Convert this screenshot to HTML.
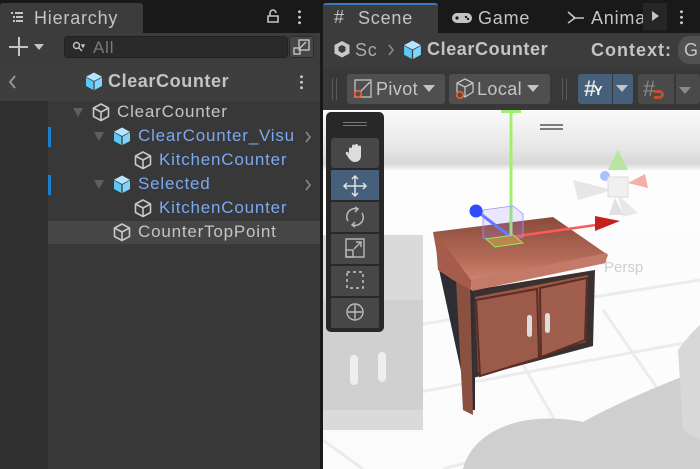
<!DOCTYPE html>
<html><head><style>
*{margin:0;padding:0;box-sizing:border-box}
body{width:700px;height:469px;overflow:hidden;background:#191919;font-family:"Liberation Sans",sans-serif;position:relative;color:#c4c4c4}
.a{position:absolute}
.t{font-size:17px;white-space:nowrap;letter-spacing:0.8px}
.blue{color:#7ca8f0}
</style></head><body>
<svg width="0" height="0" style="position:absolute"><defs>
<symbol id="cube" viewBox="0 0 20 20"><path d="M10 2L17.5 6V14.5L10 18.5L2.5 14.5V6Z M2.5 6L10 10L17.5 6 M10 10V18.5" fill="none" stroke="#c8c8c8" stroke-width="1.6" stroke-linejoin="round"/></symbol>
<symbol id="bcube" viewBox="0 0 20 20"><path d="M10 1.5L18 5.8L10 10L2 5.8Z" fill="#b5e5ff"/><path d="M2 6.5L9.4 10.6V19L2 15Z" fill="#5ec8f5"/><path d="M10.6 10.6L18 6.5V15L10.6 19Z" fill="#7dd5fb"/></symbol>
</defs></svg>

<!-- LEFT PANEL -->
<div class="a" style="left:0;top:3px;width:143px;height:30px;background:#3c3c3c;border-radius:3px 3px 0 0"></div>
<div class="a" style="left:11px;top:11px;width:12px;height:12px">
<div class="a" style="left:0;top:1px;width:2px;height:2px;background:#c4c4c4"></div><div class="a" style="left:4px;top:1px;width:8px;height:1.5px;background:#c4c4c4"></div>
<div class="a" style="left:2px;top:5px;width:2px;height:2px;background:#c4c4c4"></div><div class="a" style="left:5px;top:5px;width:7px;height:1.5px;background:#c4c4c4"></div>
<div class="a" style="left:2px;top:9px;width:2px;height:2px;background:#c4c4c4"></div><div class="a" style="left:5px;top:9px;width:7px;height:1.5px;background:#c4c4c4"></div></div>
<div class="a t" style="left:34px;top:8px;font-size:18px">Hierarchy</div>
<svg class="a" style="left:266px;top:8px" width="14" height="16"><path d="M2 8h10v6H2z M4 8V5a3 3 0 0 1 6 0" fill="none" stroke="#c4c4c4" stroke-width="1.6"/></svg>
<div class="a" style="left:298px;top:9px;width:3px;height:16px;background:radial-gradient(circle,#c4c4c4 1.4px,transparent 1.6px) 0 0/3px 5.5px"></div>
<div class="a" style="left:0;top:33px;width:320px;height:31px;background:#3c3c3c"></div>
<div class="a" style="left:9px;top:46px;width:19px;height:2px;background:#c4c4c4"></div>
<div class="a" style="left:18px;top:37px;width:2px;height:19px;background:#c4c4c4"></div>
<div class="a" style="left:34px;top:44px;border:5px solid transparent;border-top:6px solid #c4c4c4"></div>
<div class="a" style="left:64px;top:36px;width:224px;height:22px;background:#2a2a2a;border:1px solid #212121;border-radius:4px"></div>
<svg class="a" style="left:72px;top:41px" width="14" height="12"><circle cx="4.5" cy="4.5" r="3" fill="none" stroke="#c4c4c4" stroke-width="1.4"/><path d="M7 7L10 10M10 4L12 4L11 6Z" stroke="#c4c4c4" stroke-width="1.4" fill="#c4c4c4"/></svg>
<div class="a t" style="left:93px;top:38px;color:#7a7a7a">All</div>
<div class="a" style="left:289px;top:36px;width:25px;height:22px;background:#474747;border:1px solid #2a2a2a;border-radius:3px"></div>
<svg class="a" style="left:292px;top:38px" width="20" height="18"><rect x="7" y="2" width="10" height="10" fill="none" stroke="#c4c4c4" stroke-width="1.4"/><rect x="2" y="10" width="6" height="6" fill="none" stroke="#c4c4c4" stroke-width="1.4"/><path d="M8 10L14 4" stroke="#c4c4c4" stroke-width="1.4"/></svg>

<div class="a" style="left:0;top:64px;width:320px;height:37px;background:#3e3e3e"></div>
<svg class="a" style="left:7px;top:74px" width="10" height="16"><path d="M8 2L3 8L8 14" fill="none" stroke="#9a9a9a" stroke-width="1.8"/></svg>
<svg class="a" style="left:84px;top:71px" width="20" height="20"><use href="#bcube"/></svg>
<div class="a t" style="left:108px;top:71px;font-weight:bold;font-size:18px;letter-spacing:0.6px">ClearCounter</div>
<div class="a" style="left:300px;top:74px;width:3px;height:16px;background:radial-gradient(circle,#c4c4c4 1.4px,transparent 1.6px) 0 0/3px 5.5px"></div>

<div class="a" style="left:0;top:101px;width:48px;height:368px;background:#303030"></div>
<div class="a" style="left:48px;top:101px;width:272px;height:368px;background:#383838"></div>
<div class="a" style="left:48px;top:221px;width:272px;height:23px;background:#464646"></div>
<div class="a" style="left:48px;top:127px;width:3px;height:20px;background:#1a7fd0"></div>
<div class="a" style="left:48px;top:175px;width:3px;height:20px;background:#1a7fd0"></div>

<div class="a" style="left:73px;top:108px;border:5px solid transparent;border-top:9px solid #5f5f5f"></div>
<svg class="a" style="left:91px;top:102px" width="20" height="20"><use href="#cube"/></svg>
<div class="a t" style="left:117px;top:102px">ClearCounter</div>

<div class="a" style="left:94px;top:132px;border:5px solid transparent;border-top:9px solid #5f5f5f"></div>
<svg class="a" style="left:112px;top:126px" width="20" height="20"><use href="#bcube"/></svg>
<div class="a t blue" style="left:138px;top:126px;width:157px;overflow:hidden">ClearCounter_Visual</div>
<svg class="a" style="left:304px;top:130px" width="8" height="14"><path d="M2 2L6 7L2 12" fill="none" stroke="#8a8a8a" stroke-width="1.6"/></svg>
<svg class="a" style="left:133px;top:150px" width="20" height="20"><use href="#cube"/></svg>
<div class="a t blue" style="left:159px;top:150px">KitchenCounter</div>

<div class="a" style="left:94px;top:180px;border:5px solid transparent;border-top:9px solid #5f5f5f"></div>
<svg class="a" style="left:112px;top:174px" width="20" height="20"><use href="#bcube"/></svg>
<div class="a t blue" style="left:138px;top:174px">Selected</div>
<svg class="a" style="left:304px;top:178px" width="8" height="14"><path d="M2 2L6 7L2 12" fill="none" stroke="#8a8a8a" stroke-width="1.6"/></svg>
<svg class="a" style="left:133px;top:198px" width="20" height="20"><use href="#cube"/></svg>
<div class="a t blue" style="left:159px;top:198px">KitchenCounter</div>
<svg class="a" style="left:112px;top:222px" width="20" height="20"><use href="#cube"/></svg>
<div class="a t" style="left:138px;top:222px">CounterTopPoint</div>

<!-- RIGHT PANEL -->
<div class="a" style="left:323px;top:3px;width:115px;height:30px;background:#3c3c3c;border-top:2px solid #3a79bb;border-radius:3px 3px 0 0"></div>
<div class="a t" style="left:334px;top:7px;font-size:18px">#</div>
<div class="a t" style="left:358px;top:8px;font-size:18px">Scene</div>
<svg class="a" style="left:451px;top:12px" width="22" height="12"><rect x="1" y="1" width="20" height="10" rx="5" fill="#c4c4c4"/><circle cx="6" cy="6" r="1.6" fill="#191919"/><circle cx="15" cy="5" r="1.2" fill="#191919"/><circle cx="17" cy="7" r="1.2" fill="#191919"/></svg>
<div class="a t" style="left:478px;top:8px;font-size:18px">Game</div>
<svg class="a" style="left:567px;top:10px" width="18" height="14"><path d="M1 2L8 8L1 13 M6 8H17" fill="none" stroke="#c4c4c4" stroke-width="1.6"/></svg>
<div class="a t" style="left:591px;top:8px;font-size:18px;width:52px;overflow:hidden">Animation</div>
<div class="a" style="left:643px;top:3px;width:24px;height:27px;background:#262626"></div>
<div class="a" style="left:652px;top:11px;border:5px solid transparent;border-left:7px solid #c4c4c4"></div>
<div class="a" style="left:680px;top:9px;width:3px;height:16px;background:radial-gradient(circle,#c4c4c4 1.4px,transparent 1.6px) 0 0/3px 5.5px"></div>

<div class="a" style="left:323px;top:33px;width:377px;height:36px;background:#3c3c3c"></div>
<svg class="a" style="left:332px;top:39px" width="20" height="20"><path d="M10 2L17.5 6V14.5L10 18.5L2.5 14.5V6Z" fill="#c8c8c8"/><path d="M10 6L13.5 8V12L10 14L6.5 12V8Z" fill="#3c3c3c"/></svg>
<div class="a t" style="left:355px;top:40px;font-size:18px;color:#aaa">Sc</div>
<svg class="a" style="left:387px;top:43px" width="8" height="14"><path d="M2 2L6 7L2 12" fill="none" stroke="#8a8a8a" stroke-width="1.6"/></svg>
<svg class="a" style="left:402px;top:39px" width="21" height="21"><use href="#bcube"/></svg>
<div class="a t" style="left:427px;top:39px;font-weight:bold;font-size:18px;letter-spacing:0.6px">ClearCounter</div>
<div class="a t" style="left:591px;top:40px;font-weight:bold;font-size:18px;letter-spacing:1px">Context:</div>
<div class="a" style="left:678px;top:36px;width:40px;height:28px;background:#515151;border-radius:12px"></div>
<div class="a t" style="left:684px;top:40px;font-size:18px">Gr</div>

<div class="a" style="left:323px;top:69px;width:377px;height:41px;background:#383838"></div>
<div class="a" style="left:332px;top:78px;width:5px;height:22px;border-left:1px solid #5a5a5a;border-right:1px solid #5a5a5a"></div>
<div class="a" style="left:347px;top:74px;width:98px;height:30px;background:#4f4f4f;border-radius:3px"></div>
<svg class="a" style="left:353px;top:78px" width="22" height="22"><rect x="2" y="2" width="16" height="17" fill="none" stroke="#c4c4c4" stroke-width="1.3"/><path d="M4 17L17 4" stroke="#c4c4c4" stroke-width="1.3"/><circle cx="5" cy="16" r="3.3" fill="#4f4f4f" stroke="#f06030" stroke-width="1.6"/></svg>
<div class="a t" style="left:376px;top:79px;font-size:18px;letter-spacing:0.4px">Pivot</div>
<div class="a" style="left:423px;top:85px;border:6px solid transparent;border-top:7px solid #c4c4c4"></div>
<div class="a" style="left:449px;top:74px;width:101px;height:30px;background:#4f4f4f;border-radius:3px"></div>
<svg class="a" style="left:454px;top:77px" width="24" height="24"><path d="M11 2L19 6V15L11 20L3 15V6Z M3 6L11 10L19 6 M11 10V20" fill="none" stroke="#c4c4c4" stroke-width="1.3"/><circle cx="6" cy="18" r="3.3" fill="#4f4f4f" stroke="#f06030" stroke-width="1.6"/></svg>
<div class="a t" style="left:477px;top:79px;font-size:18px;letter-spacing:0.4px">Local</div>
<div class="a" style="left:527px;top:85px;border:6px solid transparent;border-top:7px solid #c4c4c4"></div>
<div class="a" style="left:562px;top:78px;width:5px;height:22px;border-left:1px solid #5a5a5a;border-right:1px solid #5a5a5a"></div>
<div class="a" style="left:578px;top:74px;width:55px;height:30px;background:#46607c;border-radius:3px"></div>
<div class="a" style="left:612px;top:74px;width:1px;height:30px;background:#383838"></div>
<div class="a t" style="left:584px;top:76px;font-size:22px;color:#e0e0e0;font-weight:bold">#</div>
<div class="a t" style="left:594px;top:83px;font-size:13px;color:#fff;font-weight:bold">Y</div>
<div class="a" style="left:616px;top:85px;border:6px solid transparent;border-top:7px solid #c4c4c4"></div>
<div class="a" style="left:638px;top:74px;width:62px;height:30px;background:#4a4a4a;border-radius:3px"></div>
<div class="a" style="left:674px;top:74px;width:2px;height:30px;background:#383838"></div>
<div class="a t" style="left:643px;top:76px;font-size:22px;color:#8a8a8a">#</div>
<div class="a" style="left:654px;top:90px;width:10px;height:9px;border:3px solid #c05030;border-left:none;border-radius:0 5px 5px 0"></div>
<div class="a" style="left:679px;top:87px;border:6px solid transparent;border-top:7px solid #8a8a8a"></div>

<!-- SCENE -->
<svg class="a" style="left:323px;top:110px" width="377" height="359" viewBox="0 0 377 359">
<defs>
<linearGradient id="sky" x1="0" y1="0" x2="0" y2="1"><stop offset="0" stop-color="#fafafa"/><stop offset=".1" stop-color="#e8e8e8"/><stop offset=".15" stop-color="#d8d8d8"/><stop offset=".17" stop-color="#fdfdfd"/><stop offset="1" stop-color="#fbfbfb"/></linearGradient>
<linearGradient id="top" x1="0" y1="0" x2="0" y2="1"><stop offset="0" stop-color="#8a4a3a"/><stop offset=".6" stop-color="#b66e5a"/><stop offset="1" stop-color="#d89080"/></linearGradient>
</defs>
<rect width="377" height="359" fill="url(#sky)"/>
<g stroke="#ececec" stroke-width="3" fill="none"><path d="M0 230L377 170 M0 300L377 230 M120 359L377 290 M40 359L0 330 M180 220L260 359 M280 200L377 340"/></g>
<path d="M0 125H100V320H0Z" fill="#dadada"/>
<path d="M0 190H100V300H0Z" fill="#d0d0d0"/>
<rect x="27" y="245" width="8" height="30" rx="4" fill="#eee"/><rect x="55" y="242" width="8" height="30" rx="4" fill="#eee"/>
<path d="M140 359C150 320 200 300 260 312C300 290 350 270 377 260V359Z" fill="#cfcfcf"/>
<path d="M355 240C370 220 377 215 377 215V330L360 320Z" fill="#d8d8d8"/>
<!-- cabinet -->
<path d="M115 155L140 270L145 300L152 300L152 174Z" fill="#2d2d33"/>
<path d="M133 170L147 170L150 305L140 300Z" fill="#8a5040"/>
<path d="M150 180L272 160L270 236L150 268Z" fill="#3a3030"/>
<path d="M152 187L265 165L263 232L155 262Z" fill="#9a5646"/>
<path d="M153 190L214 179L216 248L157 266Z" fill="#9c5a4a" stroke="#5a2e26" stroke-width="2"/>
<path d="M217 178L264 168L262 230L218 247Z" fill="#a05e4c" stroke="#5a2e26" stroke-width="2"/>
<rect x="204" y="205" width="5" height="22" rx="2.5" fill="#ddd"/><rect x="222" y="203" width="5" height="20" rx="2.5" fill="#ddd"/>
<path d="M110 122L230 107L285 145L282 152L148 180L115 150Z" fill="url(#top)"/>
<path d="M112 122L115 160L130 170L148 180L148 170Z" fill="#a65c4c"/>
<path d="M148 170L284 143L283 153L149 181Z" fill="#c47a68"/>
<!-- gizmo -->
<path d="M188 0V127" stroke="#a0f070" stroke-width="3"/>
<rect x="178" y="0" width="20" height="3" fill="#a0f070"/>
<path d="M188 127L287 113" stroke="#ff5a5a" stroke-width="2.5"/>
<path d="M272 106L297 111L272 121Z" fill="#c42020"/>
<path d="M188 127L155 102" stroke="#5a78ff" stroke-width="3"/>
<circle cx="153" cy="101" r="6.5" fill="#2b4cff"/>
<path d="M160 100L190 96L200 104L200 127L186 131L160 128Z" fill="rgba(150,130,255,.18)" stroke="#a090ff" stroke-width=".8"/>
<path d="M163 129L190 125L200 133L172 137Z" fill="#b88850" stroke="#8cef50" stroke-width="1"/>
<!-- orientation gizmo -->
<path d="M295 40L305 60L285 60Z" fill="#b8e6a0"/>
<circle cx="282" cy="66" r="5" fill="#a8c0ff"/>
<path d="M305 73L322 64L325 78Z" fill="#f4b0a8"/>
<path d="M290 80L250 70L255 90Z" fill="#e6e6e6"/>
<path d="M295 85L315 103L300 107Z" fill="#e8e8e8"/>
<path d="M292 88L300 105L286 105Z" fill="#e0e0e0"/>
<rect x="285" y="67" width="20" height="20" fill="#f0f0f0" stroke="#ddd"/>
<text x="281" y="162" font-family="Liberation Sans" font-size="15" fill="#cfcfcf">Persp</text>
<path d="M217 15H240M217 19H240" stroke="#555" stroke-width="1.5"/>
</svg>

<!-- tool palette -->
<div class="a" style="left:326px;top:112px;width:58px;height:220px;background:#282828;border-radius:5px"></div>
<div class="a" style="left:343px;top:122px;width:24px;height:4px;border-top:1px solid #777;border-bottom:1px solid #777"></div>
<div class="a" style="left:331px;top:138px;width:48px;height:30px;background:#474747;border-radius:3px"></div>
<svg class="a" style="left:343px;top:141px" width="24" height="24"><path d="M6 14V8a1.5 1.5 0 0 1 3 0V5a1.5 1.5 0 0 1 3 0V4.5a1.5 1.5 0 0 1 3 0V6a1.5 1.5 0 0 1 3 0V15c0 4-3 6-6 6s-5-2-7-5l-2-3a1.4 1.4 0 0 1 2.5-1.5z" fill="#ddd"/></svg>
<div class="a" style="left:331px;top:170px;width:48px;height:30px;background:#46607c"></div>
<svg class="a" style="left:342px;top:174px" width="26" height="24"><path d="M13 2V22M2 12H24M10 5L13 2L16 5M10 19L13 22L16 19M5 9L2 12L5 15M21 9L24 12L21 15" fill="none" stroke="#e0e0e0" stroke-width="1.5"/></svg>
<div class="a" style="left:331px;top:202px;width:48px;height:30px;background:#474747"></div>
<svg class="a" style="left:343px;top:205px" width="24" height="24"><path d="M5 16A8 8 0 0 1 14 4M19 8A8 8 0 0 1 10 20M12 2L15 4L12 7M12 17L9 20L12 22" fill="none" stroke="#bbb" stroke-width="1.5"/></svg>
<div class="a" style="left:331px;top:234px;width:48px;height:30px;background:#474747"></div>
<svg class="a" style="left:344px;top:237px" width="22" height="22"><rect x="2" y="2" width="18" height="18" fill="none" stroke="#bbb" stroke-width="1.4"/><rect x="2" y="13" width="7" height="7" fill="none" stroke="#bbb" stroke-width="1.4"/><path d="M10 12L17 5M12 5H17V10" fill="none" stroke="#bbb" stroke-width="1.4"/></svg>
<div class="a" style="left:331px;top:266px;width:48px;height:30px;background:#474747"></div>
<svg class="a" style="left:344px;top:269px" width="22" height="22"><rect x="3" y="3" width="16" height="16" fill="none" stroke="#ccc" stroke-width="1.4" stroke-dasharray="3 3"/></svg>
<div class="a" style="left:331px;top:298px;width:48px;height:30px;background:#474747"></div>
<svg class="a" style="left:343px;top:300px" width="24" height="24"><circle cx="12" cy="12" r="8" fill="none" stroke="#bbb" stroke-width="1.4"/><path d="M12 5V19M5 12H19" stroke="#bbb" stroke-width="1.4"/></svg>
</body></html>
